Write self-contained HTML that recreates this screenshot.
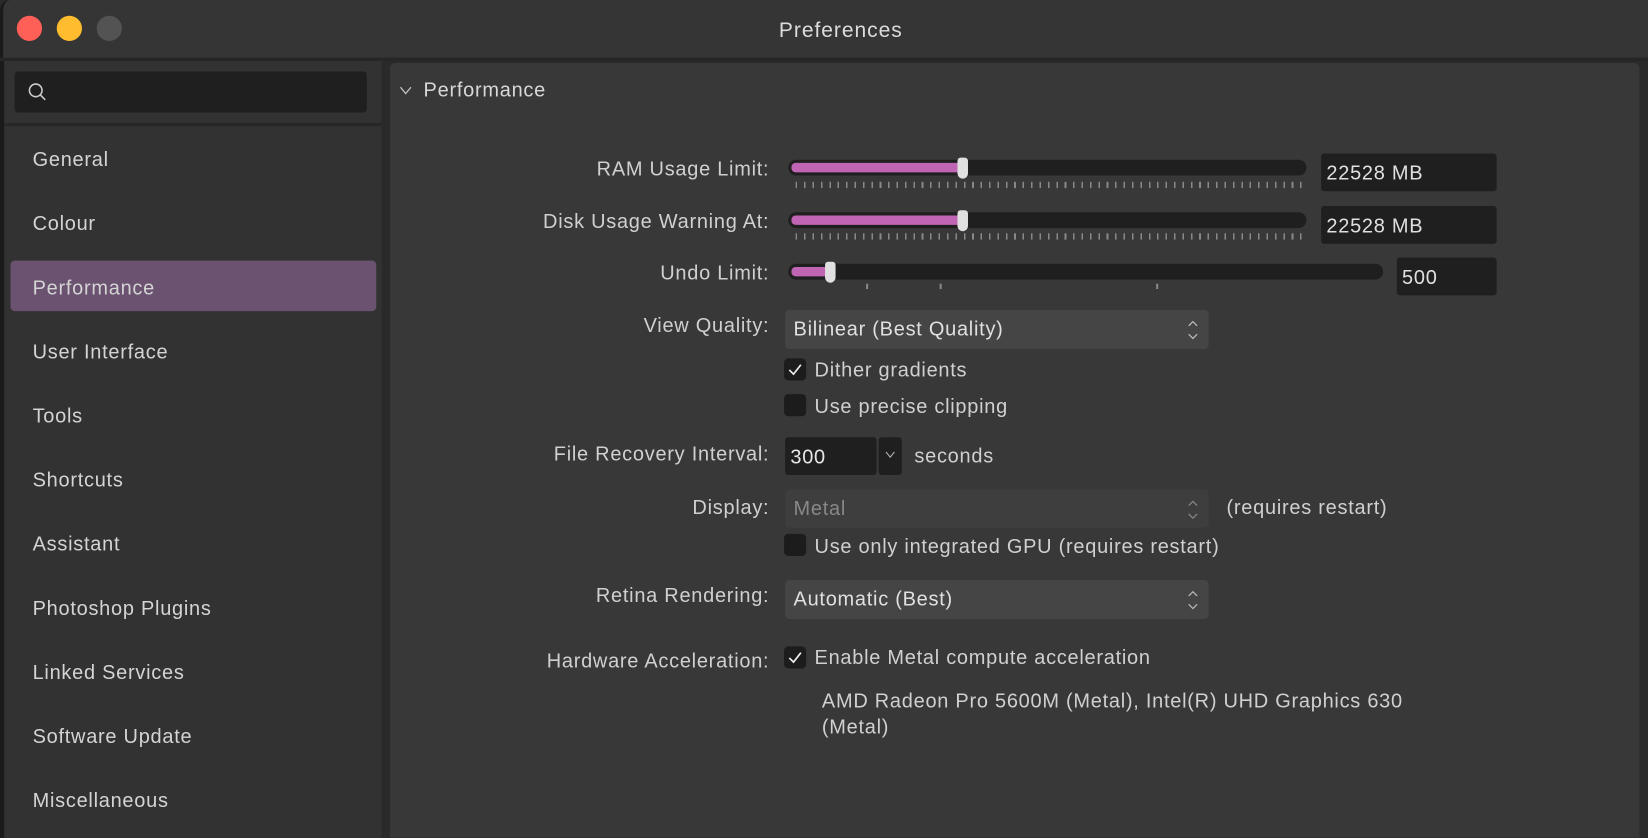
<!DOCTYPE html>
<html><head><meta charset="utf-8"><style>
html,body{margin:0;padding:0;background:#2a2a2a;width:1648px;height:838px;overflow:hidden}
#w{position:absolute;left:0;top:0;width:1568px;height:797px;transform:scale(1.05102);transform-origin:0 0;font-family:"Liberation Sans",sans-serif;color:#d0d0d0;font-size:19px;letter-spacing:0.7px}
.a{position:absolute}
.t{position:absolute;white-space:nowrap;line-height:22px;margin-top:1.5px}
.r{text-align:right;width:400px}
.dot{position:absolute;width:24px;height:24px;border-radius:50%;top:15px}
.item{position:absolute;left:31px;line-height:22px;color:#d4d4d4;margin-top:1.5px}
.track{position:absolute;height:15px;background:#1f1f1f;border-radius:8px}
.fill{position:absolute;height:9px;top:3px;left:3px;background:#c064b4;border-radius:4px 0 0 4px}
.thumb{position:absolute;width:10px;height:20px;background:#e0e0e0;border-radius:3px 3px 5px 5px;top:-2px}
.box{position:absolute;background:#1f1f1f;border-radius:3px}
.dd{position:absolute;background:#454545;border-radius:4px;height:37px;left:747px;width:403px}
.dd .t{margin-top:0}
.cb{position:absolute;left:746px;width:21px;height:21px;background:#1c1c1c;border-radius:4px}
.arr{position:absolute;right:9px;top:9px}
</style></head><body><div id="w">
<div class="a" style="left:0;top:0;width:1568px;height:55px;background:#353535;border-top-left-radius:10px;border-left:3px solid #1a1a1a;box-sizing:border-box"></div>
<div class="dot" style="left:16px;background:#fe5f57"></div>
<div class="dot" style="left:54px;background:#febc2e"></div>
<div class="dot" style="left:92px;background:#535353"></div>
<div class="t" style="left:0;width:1600px;text-align:center;top:16px;font-size:20px;letter-spacing:0.9px;color:#dcdcdc">Preferences</div>
<div class="a" style="left:0;top:55px;width:1568px;height:3px;background:#262626"></div>
<div class="a" style="left:0;top:58px;width:4px;height:739px;background:#1a1a1a"></div>
<div class="a" style="left:4px;top:58px;width:359px;height:739px;background:#323232"></div>
<div class="a" style="left:14px;top:68px;width:335px;height:39px;background:#1f1f1f;border-radius:3px"></div>
<svg class="a" style="left:26px;top:78px" width="20" height="20" viewBox="0 0 20 20"><circle cx="8" cy="8" r="6" fill="none" stroke="#ccc" stroke-width="1.5"/><line x1="12.5" y1="12.5" x2="17" y2="17" stroke="#ccc" stroke-width="1.5"/></svg>
<div class="a" style="left:4px;top:117px;width:359px;height:3px;background:#272727"></div>
<div class="a" style="left:363px;top:58px;width:8px;height:739px;background:#2a2a2a"></div>
<div class="a" style="left:371px;top:60px;width:1189px;height:737px;background:#383838;border-radius:5px 5px 0 0"></div>
<div class="a" style="left:1560px;top:58px;width:8px;height:739px;background:#2a2a2a"></div>
<div class="a" style="left:10px;top:248px;width:348px;height:48px;background:#6a5270;border-radius:4px"></div>
<div class="item" style="top:140px">General</div>
<div class="item" style="top:201px">Colour</div>
<div class="item" style="top:262px">Performance</div>
<div class="item" style="top:323px">User Interface</div>
<div class="item" style="top:384px">Tools</div>
<div class="item" style="top:445px">Shortcuts</div>
<div class="item" style="top:506px">Assistant</div>
<div class="item" style="top:567px">Photoshop Plugins</div>
<div class="item" style="top:628px">Linked Services</div>
<div class="item" style="top:689px">Software Update</div>
<div class="item" style="top:750px">Miscellaneous</div>
<svg class="a" style="left:379px;top:80px" width="14" height="12"><polyline points="2,3 7,9 12,3" fill="none" stroke="#bbb" stroke-width="1.3"/></svg>
<div class="t" style="left:403px;top:74px;color:#d8d8d8">Performance</div>
<div class="t r" style="left:332px;top:149px">RAM Usage Limit:</div>
<div class="t r" style="left:332px;top:199px">Disk Usage Warning At:</div>
<div class="t r" style="left:332px;top:248px">Undo Limit:</div>
<div class="t r" style="left:332px;top:298px">View Quality:</div>
<div class="t r" style="left:332px;top:420px">File Recovery Interval:</div>
<div class="t r" style="left:332px;top:471px">Display:</div>
<div class="t r" style="left:332px;top:555px">Retina Rendering:</div>
<div class="t r" style="left:332px;top:617px">Hardware Acceleration:</div>
<div class="track" style="left:750px;top:152px;width:493px"><div class="fill" style="width:163px"></div><div class="thumb" style="left:161px"></div></div>
<div class="a" style="left:757px;top:173px;width:482px;height:6px;background:repeating-linear-gradient(90deg,#888 0 1.5px,transparent 1.5px 8px)"></div>
<div class="box" style="left:1257px;top:146px;width:167px;height:36px"></div>
<div class="t" style="left:1262px;top:153px;color:#e0e0e0">22528 MB</div>
<div class="track" style="left:750px;top:202px;width:493px"><div class="fill" style="width:163px"></div><div class="thumb" style="left:161px"></div></div>
<div class="a" style="left:757px;top:222px;width:482px;height:6px;background:repeating-linear-gradient(90deg,#888 0 1.5px,transparent 1.5px 8px)"></div>
<div class="box" style="left:1257px;top:196px;width:167px;height:36px"></div>
<div class="t" style="left:1262px;top:203px;color:#e0e0e0">22528 MB</div>
<div class="track" style="left:750px;top:251px;width:566px"><div class="fill" style="width:37px"></div><div class="thumb" style="left:35px"></div></div>
<div class="a" style="left:824px;top:270px;width:1.5px;height:5px;background:#888"></div>
<div class="a" style="left:894px;top:270px;width:1.5px;height:5px;background:#888"></div>
<div class="a" style="left:1100px;top:270px;width:1.5px;height:5px;background:#888"></div>
<div class="box" style="left:1329px;top:245px;width:95px;height:36px"></div>
<div class="t" style="left:1334px;top:252px;color:#e0e0e0">500</div>
<div class="dd" style="top:295px"><div class="t" style="left:8px;top:8px;color:#e0e0e0">Bilinear (Best Quality)</div><svg class="arr" width="12" height="20"><polyline points="2,6 6,2 10,6" fill="none" stroke="#bbb" stroke-width="1.2"/><polyline points="2,14 6,18 10,14" fill="none" stroke="#bbb" stroke-width="1.2"/></svg></div>
<div class="cb" style="top:341px"></div>
<svg class="a" style="left:749px;top:344px" width="15" height="15"><polyline points="2,8 6,12 13,3" fill="none" stroke="#eee" stroke-width="1.6"/></svg>
<div class="t" style="left:775px;top:340px">Dither gradients</div>
<div class="cb" style="top:375px"></div>
<div class="t" style="left:775px;top:375px">Use precise clipping</div>
<div class="box" style="left:747px;top:416px;width:87px;height:36px"></div>
<div class="t" style="left:752px;top:423px;color:#e6e6e6">300</div>
<div class="box" style="left:836px;top:416px;width:22px;height:36px"></div>
<svg class="a" style="left:842px;top:429px" width="10" height="8"><polyline points="1,1 5,6 9,1" fill="none" stroke="#bbb" stroke-width="1"/></svg>
<div class="t" style="left:870px;top:422px">seconds</div>
<div class="dd" style="top:466px;height:36px;background:#3e3e3e"><div class="t" style="left:8px;top:8px;color:#888">Metal</div><svg class="arr" width="12" height="20"><polyline points="2,6 6,2 10,6" fill="none" stroke="#888" stroke-width="1.2"/><polyline points="2,14 6,18 10,14" fill="none" stroke="#888" stroke-width="1.2"/></svg></div>
<div class="t" style="left:1167px;top:471px">(requires restart)</div>
<div class="cb" style="top:508px"></div>
<div class="t" style="left:775px;top:508px">Use only integrated GPU (requires restart)</div>
<div class="dd" style="top:552px"><div class="t" style="left:8px;top:8px;color:#e0e0e0">Automatic (Best)</div><svg class="arr" width="12" height="20"><polyline points="2,6 6,2 10,6" fill="none" stroke="#bbb" stroke-width="1.2"/><polyline points="2,14 6,18 10,14" fill="none" stroke="#bbb" stroke-width="1.2"/></svg></div>
<div class="cb" style="top:615px"></div>
<svg class="a" style="left:749px;top:618px" width="15" height="15"><polyline points="2,8 6,12 13,3" fill="none" stroke="#eee" stroke-width="1.6"/></svg>
<div class="t" style="left:775px;top:614px">Enable Metal compute acceleration</div>
<div class="t" style="left:782px;top:655px">AMD Radeon Pro 5600M (Metal), Intel(R) UHD Graphics 630</div>
<div class="t" style="left:782px;top:680px">(Metal)</div>
</div></body></html>
